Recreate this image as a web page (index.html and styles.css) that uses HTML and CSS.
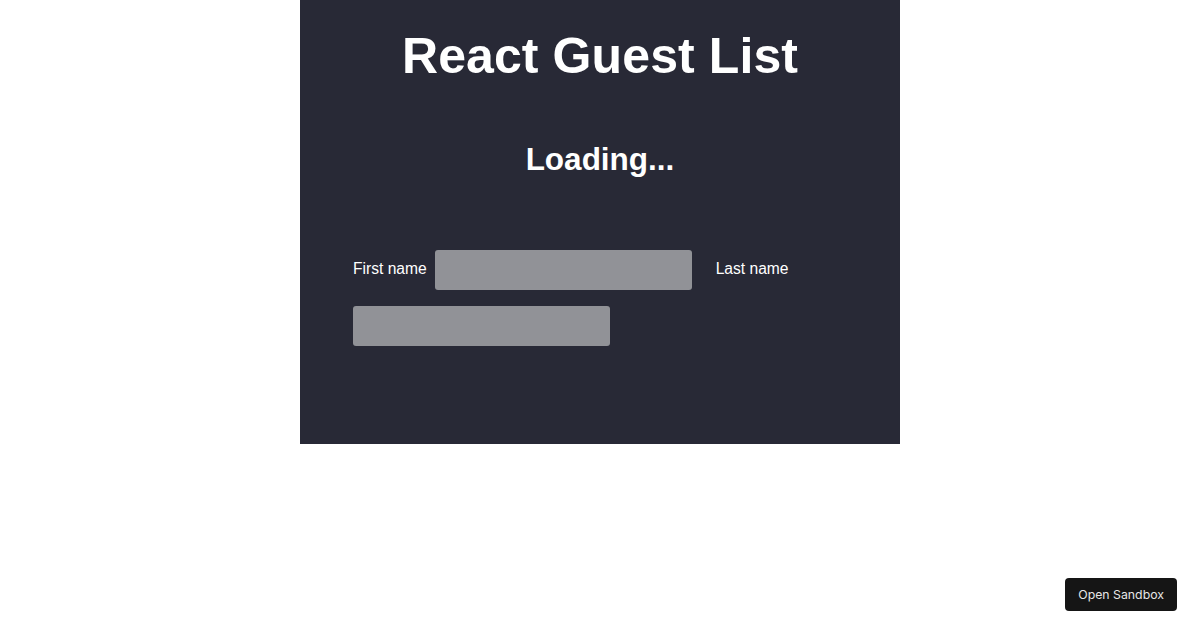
FILE: index.html
```html
<!DOCTYPE html>
<html lang="en">
  <head>
    <meta charset="UTF-8" />
    <meta name="viewport" content="width=device-width, initial-scale=1.0" />
    <title>React Guest List</title>
    <link rel="stylesheet" href="styles.css">
  </head>
  <body>
    <div class="app">
      <h1 class="title">React Guest List</h1>
      <h2 class="loading">Loading...</h2>
      <form class="guest-form">
        <label for="firstName">First name</label>
        <input id="firstName" type="text" disabled />
        <label for="lastName">Last name</label>
        <input id="lastName" type="text" disabled />
      </form>
    </div>
    <a class="sandbox-button" href="#">Open Sandbox</a>
  </body>
</html>
```

FILE: styles.css
```css
* {
  margin: 0;
  padding: 0;
  box-sizing: border-box;
}
body {
  font-family: "Liberation Sans", Arial, sans-serif;
  color: #fff;
  background: #fff;
}
.app {
  width: 600px;
  height: 444px;
  margin: 0 auto;
  padding: 28px 53px 0;
  background: #282936;
}
.title {
  font-size: 50px;
  font-weight: bold;
  text-align: center;
  line-height: 56px;
  letter-spacing: 0.1px;
}
.loading {
  margin-top: 57px;
  font-size: 31.5px;
  font-weight: bold;
  text-align: center;
  line-height: 36px;
}
.guest-form {
  display: flex;
  flex-wrap: wrap;
  align-items: center;
  row-gap: 16px;
  margin-top: 73px;
}
.guest-form label {
  margin-right: 8px;
  font-size: 15.6px;
  line-height: 18px;
  margin-top: -3px;
}
.guest-form input {
  width: 257px;
  height: 40px;
  margin-right: 24px;
  background: #919297;
  border: 0;
  border-radius: 3px;
  outline: 0;
}
.sandbox-button {
  position: fixed;
  right: 23px;
  bottom: 19px;
  padding: 0 13px;
  height: 33px;
  line-height: 33px;
  font-family: Inter, "Liberation Sans", sans-serif;
  font-size: 12.3px;
  color: #e6e6e6;
  text-decoration: none;
  background: #151515;
  border-radius: 4px;
}
```
